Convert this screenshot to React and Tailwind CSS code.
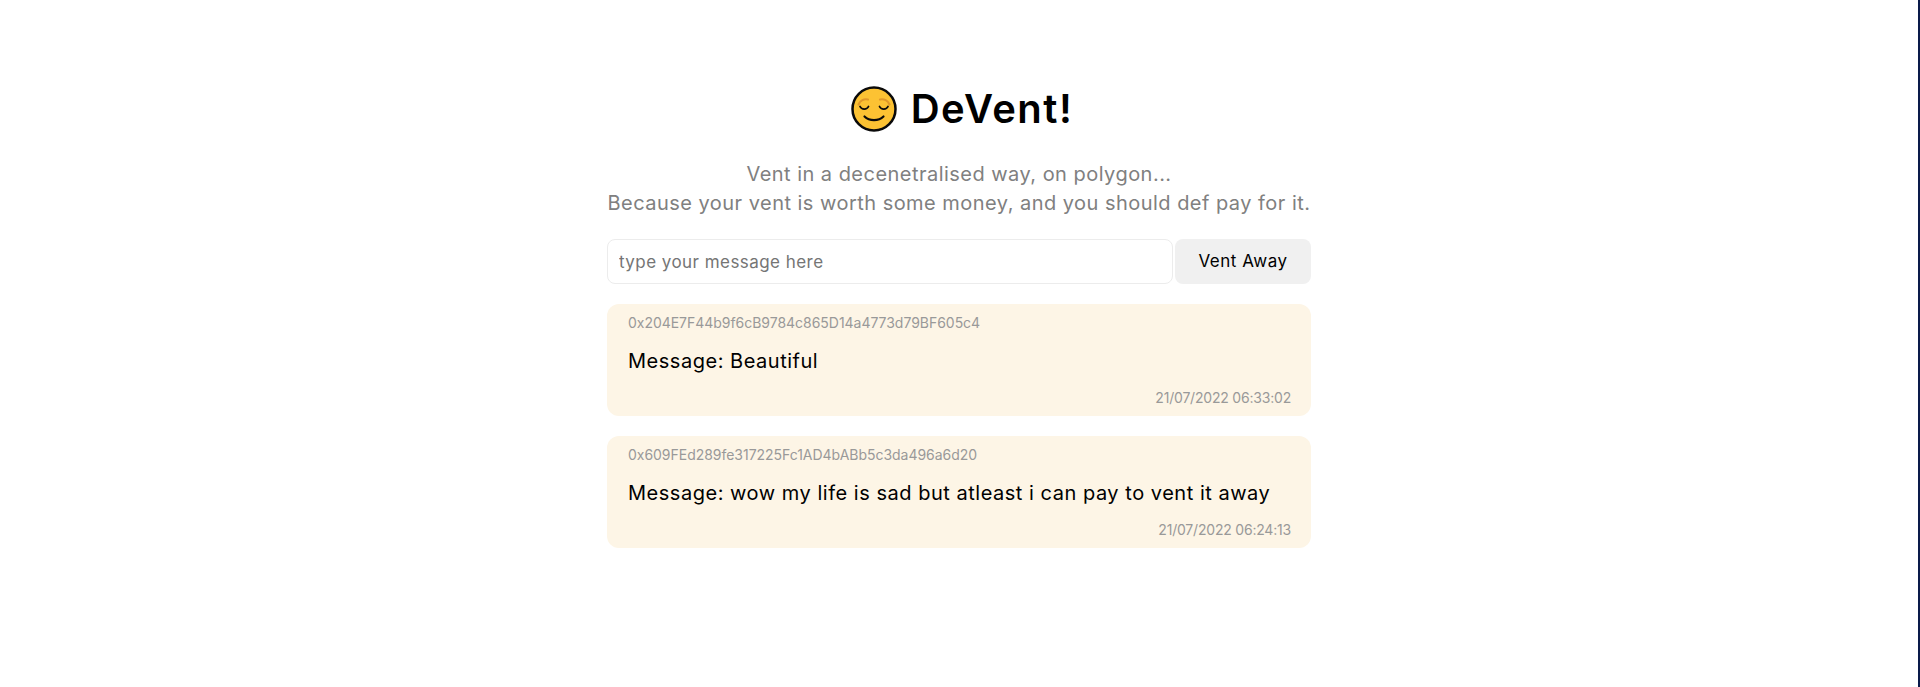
const messages = [
  {
    address: '0x204E7F44b9f6cB9784c865D14a4773d79BF605c4',
    text: 'Beautiful',
    time: '21/07/2022 06:33:02',
  },
  {
    address: '0x609FEd289fe317225Fc1AD4bABb5c3da496a6d20',
    text: 'wow my life is sad but atleast i can pay to vent it away',
    time: '21/07/2022 06:24:13',
  },
];

const RelievedFace = () => (
  <svg viewBox="0 0 46 46" className="h-[46px] w-[46px] shrink-0">
    <circle cx="23" cy="23" r="21.5" fill="#fcc233" stroke="#0a0a0a" strokeWidth="2.5" />
    <path d="M7.5 18.5c1.5-4 5.5-6 9.5-5" fill="none" stroke="#e0982a" strokeWidth="2.2" strokeLinecap="round" />
    <path d="M38.5 18.5c-1.5-4-5.5-6-9.5-5" fill="none" stroke="#e0982a" strokeWidth="2.2" strokeLinecap="round" />
    <path d="M9 20.5c1.5 3.4 7 3.4 8.5 0" fill="none" stroke="#0a0a0a" strokeWidth="1.8" strokeLinecap="round" />
    <path d="M28.5 20.5c1.5 3.4 7 3.4 8.5 0" fill="none" stroke="#0a0a0a" strokeWidth="1.8" strokeLinecap="round" />
    <path d="M13.5 30.5c5 4.8 14 4.8 19 0" fill="none" stroke="#0a0a0a" strokeWidth="2.2" strokeLinecap="round" />
  </svg>
);

const App = () => {
  return (
    <div className="flex min-h-[687px] justify-center border-r-2 border-[#0a1a4a] bg-white font-['Inter',sans-serif] text-black">
      <div className="mt-[84px] flex w-[704px] flex-col">
        <div className="flex h-[50px] items-center justify-center gap-[14px] pl-[6px]">
          <RelievedFace />
          <h1 className="text-[40px] font-semibold leading-[50px] tracking-[1.5px]">DeVent!</h1>
        </div>

        <div className="mt-[26px] whitespace-nowrap text-center text-xl leading-[29px] tracking-[0.47px] text-[#808080]">
          <p>Vent in a decenetralised way, on polygon...</p>
          <p>Because your vent is worth some money, and you should def pay for it.</p>
        </div>

        <div className="mt-[21px] flex gap-[2px]">
          <input
            placeholder="type your message here"
            className="h-[45px] flex-1 rounded-lg border border-[#ececec] pl-[11px] pr-[10px] text-[17px] tracking-[0.45px] placeholder:text-[#757575]"
          />
          <button className="h-[45px] w-[136px] rounded-lg bg-[#f0f0f0] text-[17px] tracking-[0.5px]">Vent Away</button>
        </div>

        <div className="mt-[20px] flex flex-col gap-[20px]">
          {messages.map((message) => (
            <div key={message.address} className="h-[112px] rounded-xl bg-[#fdf5e6] pl-[21px] pr-[20px] pt-[9px]">
              <div className="text-sm leading-[20px] tracking-[-0.03px] text-[#999999]">{message.address}</div>
              <div className="mt-[13px] text-xl leading-[30px] tracking-[0.52px]">Message: {message.text}</div>
              <div className="mt-[12px] text-right text-sm leading-[20px] tracking-[-0.2px] text-[#999999]">{message.time}</div>
            </div>
          ))}
        </div>
      </div>
    </div>
  );
};

export default App;
